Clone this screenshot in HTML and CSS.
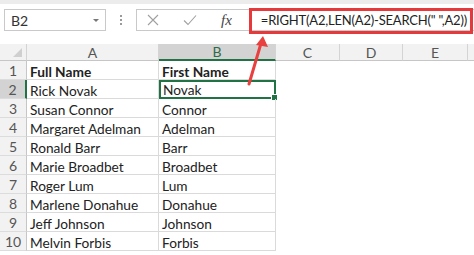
FILE: index.html
```html
<!DOCTYPE html>
<html>
<head>
<meta charset="utf-8">
<link rel="stylesheet" href="styles.css">
</head>
<body>
<div class="page">
  <div class="topstrip"></div>
  <div class="fbar">
    <div class="namebox"><span>B2</span><span class="dd"></span></div>
    <div class="dots"><i></i><i></i><i></i></div>
    <div class="fxarea">
      <svg class="ic x" width="12" height="12" viewBox="0 0 12 12"><path d="M1 1L11 11M11 1L1 11" stroke="#a0a0a0" stroke-width="1.1" fill="none"/></svg>
      <svg class="ic chk" width="14" height="12" viewBox="0 0 14 12"><path d="M1 6.5L5 10.5L13 1.5" stroke="#a0a0a0" stroke-width="1.1" fill="none"/></svg>
      <span class="fx">fx</span>
      <span class="formula">=RIGHT(A2,LEN(A2)-SEARCH(" ",A2))</span>
    </div>
  </div>
  <div class="grid">
    <div class="h corner"><span class="tri"></span></div>
    <div class="h col">A</div>
    <div class="h col sel">B</div>
    <div class="h col">C</div>
    <div class="h col">D</div>
    <div class="h col">E</div>
    <div class="h col last"></div>

    <div class="rn">1</div><div class="c b">Full Name</div><div class="c b">First Name</div><div class="e"></div><div class="e"></div><div class="e"></div><div class="e"></div>
    <div class="rn sel">2</div><div class="c">Rick Novak</div><div class="c active">Novak<span class="handle"></span></div><div class="e"></div><div class="e"></div><div class="e"></div><div class="e"></div>
    <div class="rn">3</div><div class="c">Susan Connor</div><div class="c">Connor</div><div class="e"></div><div class="e"></div><div class="e"></div><div class="e"></div>
    <div class="rn">4</div><div class="c">Margaret Adelman</div><div class="c">Adelman</div><div class="e"></div><div class="e"></div><div class="e"></div><div class="e"></div>
    <div class="rn">5</div><div class="c">Ronald Barr</div><div class="c">Barr</div><div class="e"></div><div class="e"></div><div class="e"></div><div class="e"></div>
    <div class="rn">6</div><div class="c">Marie Broadbet</div><div class="c">Broadbet</div><div class="e"></div><div class="e"></div><div class="e"></div><div class="e"></div>
    <div class="rn">7</div><div class="c">Roger Lum</div><div class="c">Lum</div><div class="e"></div><div class="e"></div><div class="e"></div><div class="e"></div>
    <div class="rn">8</div><div class="c">Marlene Donahue</div><div class="c">Donahue</div><div class="e"></div><div class="e"></div><div class="e"></div><div class="e"></div>
    <div class="rn">9</div><div class="c">Jeff Johnson</div><div class="c">Johnson</div><div class="e"></div><div class="e"></div><div class="e"></div><div class="e"></div>
    <div class="rn">10</div><div class="c">Melvin Forbis</div><div class="c">Forbis</div><div class="e"></div><div class="e"></div><div class="e"></div><div class="e"></div>
  </div>
  <div class="redbox"></div>
  <svg class="arrow" width="474" height="255" viewBox="0 0 474 255">
    <path d="M249 84L260.5 45" stroke="#e8403f" stroke-width="3" stroke-linecap="round" fill="none"/>
    <path d="M263 36L268 47L256 45Z" fill="#e8403f"/>
  </svg>
</div>
</body>
</html>
```
FILE: styles.css
```css
html, body {
  margin: 0;
  padding: 0;
  background: #ffffff;
}
.page {
  position: relative;
  width: 474px;
  height: 255px;
  overflow: hidden;
  font-family: Lato, "Open Sans", sans-serif;
  color: #222;
}
.topstrip {
  height: 4px;
  background: #ececec;
}
.fbar {
  display: flex;
  align-items: stretch;
  height: 22px;
  margin-top: 5px;
}
.namebox {
  flex: 0 0 102px;
  box-sizing: border-box;
  margin-left: 4px;
  width: 102px;
  border: 1px solid #c9c9c9;
  display: flex;
  align-items: center;
  justify-content: space-between;
  padding: 0 6px 0 6px;
  font-size: 14px;
  color: #333;
}
.dd {
  width: 0;
  height: 0;
  border-left: 3px solid transparent;
  border-right: 3px solid transparent;
  border-top: 3px solid #777;
}
.dots {
  flex: 0 0 30px;
  display: flex;
  flex-direction: column;
  align-items: center;
  justify-content: center;
  gap: 2px;
}
.dots i {
  display: block;
  width: 2px;
  height: 2px;
  background: #9a9a9a;
}
.fxarea {
  flex: 1 1 auto;
  min-width: 0;
  overflow: hidden;
  box-sizing: border-box;
  border: 1px solid #c9c9c9;
  border-right: none;
  display: flex;
  align-items: center;
}
.ic { flex: 0 0 auto; }
.ic.x { margin-left: 10px; }
.ic.chk { margin-left: 24px; }
.fx {
  flex: 0 0 auto;
  margin-left: 24px;
  font-family: "Liberation Serif", serif;
  font-style: italic;
  font-size: 15px;
  color: #444;
}
.formula {
  flex: 0 0 auto;
  margin-left: 29px;
  font-size: 13px;
  letter-spacing: -0.2px;
  color: #222;
  white-space: nowrap;
}
.grid {
  margin-top: 13px;
  display: grid;
  grid-template-columns: 27px 132px 117px 64px 63px 65px 6px;
  grid-template-rows: 17px repeat(10, 19px);
  font-size: 13.7px;
}
.h {
  box-sizing: border-box;
  background: #f2f2f2;
  border-right: 1px solid #d4d4d4;
  border-bottom: 1px solid #c6c6c6;
  display: flex;
  align-items: center;
  justify-content: center;
  color: #555;
  font-size: 14px;
}
.h.col.sel {
  background: #d3d3d3;
  border-bottom: 2px solid #217346;
  color: #2f6b48;
}
.h.last { border-right: none; }
.corner { position: relative; }
.tri {
  position: absolute;
  right: 4px;
  bottom: 3px;
  width: 0;
  height: 0;
  border-left: 9px solid transparent;
  border-bottom: 9px solid #cfcfcf;
}
.rn {
  box-sizing: border-box;
  background: #f2f2f2;
  border-right: 1px solid #c6c6c6;
  border-bottom: 1px solid #dcdcdc;
  display: flex;
  align-items: center;
  justify-content: center;
  color: #555;
  font-size: 14px;
}
.rn.sel {
  background: #d3d3d3;
  border-right: 2px solid #217346;
}
.c {
  box-sizing: border-box;
  position: relative;
  border-right: 1px solid #dadada;
  border-bottom: 1px solid #dadada;
  padding-left: 3px;
  padding-top: 2px;
  display: flex;
  align-items: center;
  white-space: nowrap;
  color: #222;
}
.c.b { font-weight: bold; }
.c.active {
  border: 2px solid #217346;
  padding-left: 2px;
  padding-top: 0;
}
.handle {
  position: absolute;
  right: -4px;
  bottom: -4px;
  width: 5px;
  height: 5px;
  background: #217346;
  border: 1px solid #fff;
}
.e { background: #fff; }
.redbox {
  position: absolute;
  left: 249px;
  top: 8px;
  width: 224px;
  height: 26px;
  box-sizing: border-box;
  border: 3px solid #e5393c;
}
.arrow {
  position: absolute;
  left: 0;
  top: 0;
  pointer-events: none;
}
```
